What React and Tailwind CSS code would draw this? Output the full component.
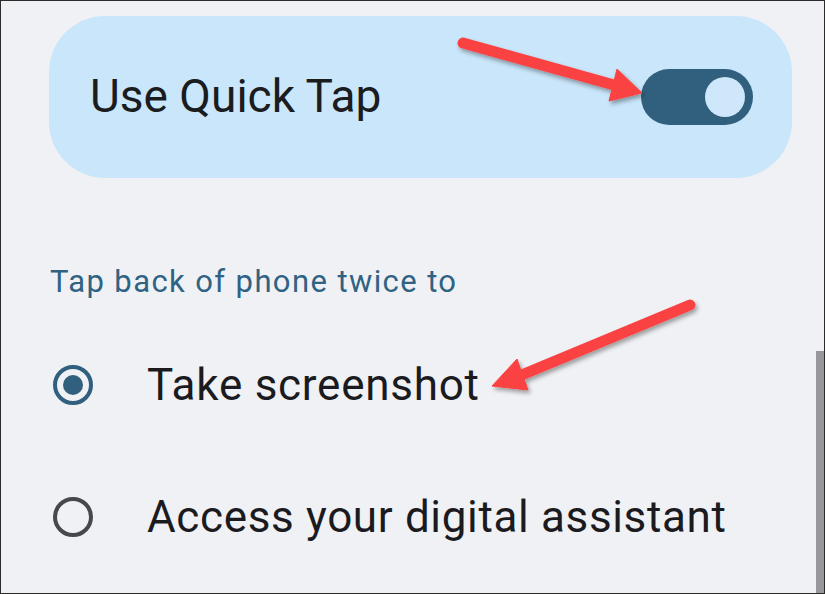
import React from 'react';

const font = { fontFamily: 'Roboto, "Noto Sans", sans-serif' };

const Radio = ({ checked }) => (
  <div
    className={`w-[40px] h-[40px] rounded-full flex items-center justify-center shrink-0 ${
      checked ? 'border-[4px] border-[#31607f]' : 'border-[4px] border-[#45484d]'
    }`}
  >
    {checked && <div className="w-[20px] h-[20px] rounded-full bg-[#31607f]" />}
  </div>
);

const Arrows = () => (
  <svg
    className="absolute top-[-1px] left-[-1px] pointer-events-none"
    width="825"
    height="594"
    viewBox="0 0 825 594"
  >
    <defs>
      <filter id="shadow" x="-20%" y="-20%" width="140%" height="140%">
        <feDropShadow dx="2" dy="3" stdDeviation="2" floodColor="#000" floodOpacity="0.35" />
      </filter>
    </defs>
    <g filter="url(#shadow)" fill="#fa4343" stroke="#fa4343">
      <line x1="463" y1="43" x2="614" y2="85" strokeWidth="11" strokeLinecap="round" />
      <polygon points="642,93 617,69 609,101" strokeWidth="1" strokeLinejoin="round" />
      <line x1="690" y1="305" x2="524" y2="374" strokeWidth="11" strokeLinecap="round" />
      <polygon points="492,386 517,359 528,390" strokeWidth="1" strokeLinejoin="round" />
    </g>
  </svg>
);

export default function App() {
  return (
    <div
      className="relative w-[825px] h-[594px] overflow-hidden bg-[#f0f1f4] border border-[#2b2b2b]"
      style={font}
    >
      {/* Quick Tap card */}
      <div className="mt-[15px] ml-[48px] w-[743px] h-[162px] rounded-[56px] bg-[#cae6fa] flex items-center justify-between pl-[41px] pr-[39px]">
        <span className="text-[46px] leading-none text-[#1a1c1e] mt-[-2px]">Use Quick Tap</span>
        <div className="w-[112px] h-[56px] rounded-full bg-[#31607f] flex items-center justify-end pr-[8px]">
          <div className="w-[40px] h-[40px] rounded-full bg-[#cfe7fa]" />
        </div>
      </div>

      {/* Options */}
      <div className="mt-[88px] pl-[49px]">
        <div className="text-[31px] leading-none tracking-[1.4px] text-[#2f6283]">Tap back of phone twice to</div>
        <div className="mt-[66px] flex items-center pl-[3px] gap-[54px]">
          <Radio checked />
          <span className="text-[44px] leading-none tracking-[0.75px] text-[#1b1b1f]">Take screenshot</span>
        </div>
        <div className="mt-[88px] flex items-center pl-[3px] gap-[54px]">
          <Radio />
          <span className="text-[44px] leading-none tracking-[0.65px] text-[#1b1b1f]">Access your digital assistant</span>
        </div>
      </div>

      {/* Scrollbar */}
      <div className="absolute right-0 top-[350px] bottom-0 w-[8px] bg-[#97989c]" />

      <Arrows />
    </div>
  );
}
